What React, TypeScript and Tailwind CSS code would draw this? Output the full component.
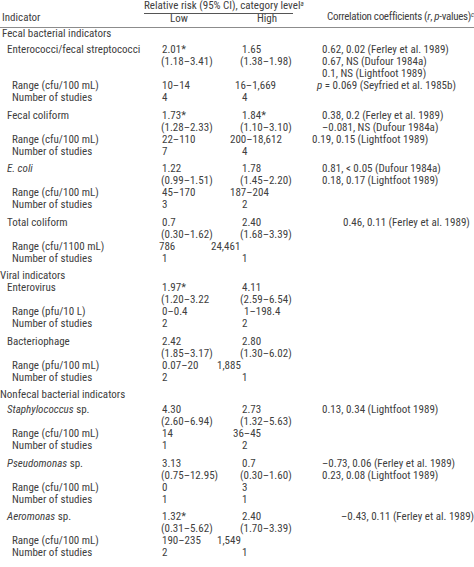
import type { ReactNode } from 'react';

type RowProps = {
  label?: ReactNode;
  indent?: string;
  low?: string;
  lowCls?: string;
  high?: string;
  highCls?: string;
  corr?: ReactNode;
  corrCls?: string;
};

// one 12px line of the table; numbers sit a hair right of the parenthesised CIs
function Row({ label, indent = 'pl-[12px]', low, lowCls, high, highCls, corr, corrCls = '' }: RowProps) {
  const lc = lowCls ?? (low && !low.startsWith('(') ? 'pl-[1px]' : '');
  const hc = highCls ?? (high && !high.startsWith('(') ? 'pl-[2px]' : '');
  return (
    <div className="flex h-[12px] leading-[12px] whitespace-nowrap">
      <div className={`w-[161px] shrink-0 ${indent}`}>{label}</div>
      <div className={`w-[79px] shrink-0 ${lc}`}>{low}</div>
      <div className={`w-[82px] shrink-0 ${hc}`}>{high}</div>
      <div className={`flex-1 ${corrCls}`}>{corr}</div>
    </div>
  );
}

const item = 'pl-[7px]';
const section = 'pl-[2px]';

export default function App() {
  return (
    <div className="min-h-[567px] w-[474px] overflow-hidden bg-white text-[11px] text-[#404040] font-['Roboto_Condensed','Liberation_Sans',sans-serif]">
      {/* header */}
      <div className="flex h-[28px] border-b border-[#8c8c8c]">
        <div className="w-[144px] shrink-0 pl-[2px] pt-[12px] leading-[12px]">Indicator</div>
        <div className="w-[149px] shrink-0">
          <div className="h-[14px] leading-[11px] border-b border-[#555] whitespace-nowrap">
            Relative risk (95% CI), category level<sup className="text-[7px] italic">a</sup>
          </div>
          <div className="flex leading-[10px]">
            <span className="w-[113px] pl-[26px]">Low</span>
            <span>High</span>
          </div>
        </div>
        <div className="pl-[34px] pt-[11px] leading-[12px] whitespace-nowrap tracking-[-0.3px]">
          Correlation coefficients (<i>r</i>, <i>p</i>-values)<sup className="text-[7px] italic">c</sup>
        </div>
      </div>

      {/* fecal bacterial */}
      <Row label="Fecal bacterial indicators" indent={section} />
      <div className="mt-[4px]">
        <Row label="Enterococci/fecal streptococci" indent={item} low="2.01*" high="1.65" corr="0.62, 0.02 (Ferley et al. 1989)" />
        <Row low="(1.18–3.41)" high="(1.38–1.98)" corr="0.67, NS (Dufour 1984a)" />
        <Row corr="0.1, NS (Lightfoot 1989)" />
        <Row label="Range (cfu/100 mL)" low="10–14" high="16–1,669" highCls="-ml-[5px]" corr={<><i>p</i> = 0.069 (Seyfried et al. 1985b)</>} />
        <Row label="Number of studies" low="4" high="4" />
      </div>
      <div className="mt-[5.5px]">
        <Row label="Fecal coliform" indent={item} low="1.73*" high="1.84*" corr="0.38, 0.2 (Ferley et al. 1989)" />
        <Row low="(1.28–2.33)" high="(1.10–3.10)" corr="–0.081, NS (Dufour 1984a)" />
        <Row label="Range (cfu/100 mL)" low="22–110" high="200–18,612" highCls="-ml-[10px]" corr="0.19, 0.15 (Lightfoot 1989)" />
        <Row label="Number of studies" low="7" high="4" />
      </div>
      <div className="mt-[5.5px]">
        <Row label={<i>E. coli</i>} indent={item} low="1.22" high="1.78" corr="0.81, < 0.05 (Dufour 1984a)" />
        <Row low="(0.99–1.51)" high="(1.45–2.20)" corr="0.18, 0.17 (Lightfoot 1989)" />
        <Row label="Range (cfu/100 mL)" low="45–170" high="187–204" highCls="-ml-[10px]" />
        <Row label="Number of studies" low="3" high="2" />
      </div>
      <div className="mt-[5.5px]">
        <Row label="Total coliform" indent={item} low="0.7" high="2.40" corr="0.46, 0.11 (Ferley et al. 1989)" corrCls="pl-[21px]" />
        <Row low="(0.30–1.62)" high="(1.68–3.39)" />
        <Row label="Range (cfu/1100 mL)" low="786" lowCls="-ml-[2px]" high="24,461" highCls="-ml-[27px]" />
        <Row label="Number of studies" low="1" high="1" />
      </div>

      {/* viral */}
      <div className="mt-[5.5px]">
        <Row label="Viral indicators" indent="pl-[0px]" />
        <Row label="Enterovirus" indent={item} low="1.97*" high="4.11" />
        <Row low="(1.20–3.22" high="(2.59–6.54)" />
        <Row label="Range (pfu/10 L)" low="0–0.4" high="1–198.4" highCls="pl-[4px]" />
        <Row label="Number of studies" low="2" high="2" />
      </div>
      <div className="mt-[5.5px]">
        <Row label="Bacteriophage" indent={item} low="2.42" high="2.80" />
        <Row low="(1.85–3.17)" high="(1.30–6.02)" />
        <Row label="Range (pfu/100 mL)" low="0.07–20" high="1,885" highCls="-ml-[23px]" />
        <Row label="Number of studies" low="2" high="1" />
      </div>

      {/* nonfecal */}
      <div className="mt-[5.5px]">
        <Row label="Nonfecal bacterial indicators" indent="pl-[0px]" />
      </div>
      <div className="mt-[3px]">
        <Row label={<><i>Staphylococcus</i> sp.</>} indent={item} low="4.30" high="2.73" corr="0.13, 0.34 (Lightfoot 1989)" />
        <Row low="(2.60–6.94)" high="(1.32–5.63)" />
        <Row label="Range (cfu/100 mL)" low="14" high="36–45" highCls="-ml-[7px]" />
        <Row label="Number of studies" low="1" high="2" />
      </div>
      <div className="mt-[5.5px]">
        <Row label={<><i>Pseudomonas</i> sp.</>} indent={item} low="3.13" high="0.7" corr="–0.73, 0.06 (Ferley et al. 1989)" />
        <Row low="(0.75–12.95)" high="(0.30–1.60)" corr="0.23, 0.08 (Lightfoot 1989)" />
        <Row label="Range (cfu/100 mL)" low="0" high="3" />
        <Row label="Number of studies" low="1" high="1" />
      </div>
      <div className="mt-[5.5px]">
        <Row label={<><i>Aeromonas</i> sp.</>} indent={item} low="1.32*" high="2.40" corr="–0.43, 0.11 (Ferley et al. 1989)" corrCls="pl-[19px]" />
        <Row low="(0.31–5.62)" high="(1.70–3.39)" />
        <Row label="Range (cfu/100 mL)" low="190–235" high="1,549" highCls="-ml-[23px]" />
        <Row label="Number of studies" low="2" high="1" />
      </div>
    </div>
  );
}
